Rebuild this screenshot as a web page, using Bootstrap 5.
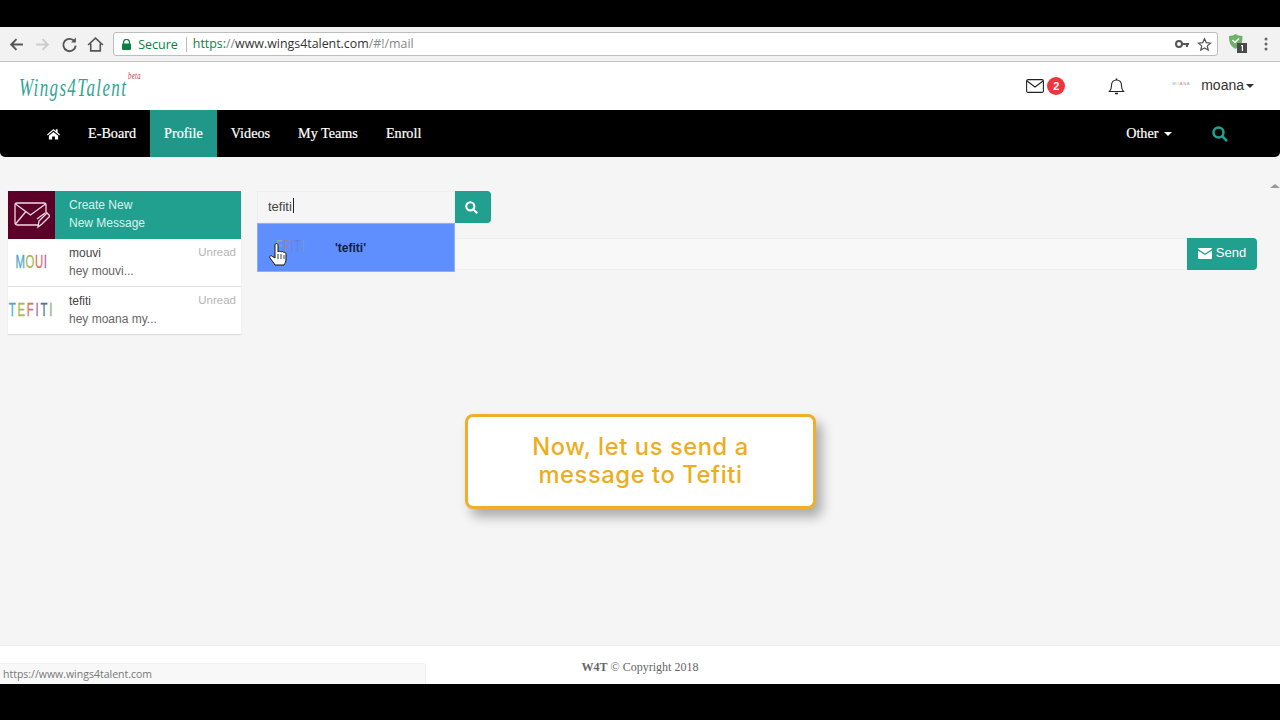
<!DOCTYPE html>
<html lang="en">
<head>
  <meta charset="UTF-8" />
  <meta name="viewport" content="width=device-width, initial-scale=1.0"/>
  <title>Wings4Talent</title>
  <link href="https://cdn.jsdelivr.net/npm/bootstrap@5.3.3/dist/css/bootstrap.min.css" rel="stylesheet" />
  <style>
    body { background: #000; height: 720px; overflow: hidden; padding: 27px 0 36px; font-family: "Liberation Sans", sans-serif; position: relative; }

    .browser-bar { height: 35px; background: #f2f2f2; border-bottom: 1px solid #c4c4c4; padding: 0 8px; }
    .bar-btn { width: 17px; height: 17px; flex: none; }
    .bar-tools { gap: 9.4px; margin-right: 9px; }
    .omnibox { height: 24px; flex: 1; background: #fff; border: 1px solid #bdbdbd; border-radius: 3px; padding: 0 5px 0 8px; font-family: "Open Sans", sans-serif; font-size: 12.5px; }
    .omni-secure { color: #0b8043; padding: 0 8px 0 7px; border-right: 1px solid #bbb; line-height: 15px; }
    .omni-url { color: #333; padding-left: 6px; font-size: 12.4px; }
    .omni-url em { font-style: normal; color: #0b8043; }
    .omni-url span { color: #888; }
    .ext-area { width: 54px; padding-left: 10px; }

    .site-top { height: 48px; background: #fff; padding: 0 26px 0 19px; }
    .site-logo { font-family: "Liberation Serif", serif; font-style: italic; font-size: 25px; letter-spacing: 2px; color: #2fa596; line-height: 1; margin-top: 3px; transform: scaleX(.68); transform-origin: left center; white-space: nowrap; }
    .site-logo sup { font-size: 10px; color: #b3413f; letter-spacing: .5px; top: -17px; left: 1px; position: relative; vertical-align: baseline; }
    .top-mail { gap: 3px; margin-right: 43px; }
    .mail-count { width: 18px; height: 18px; padding: 0; line-height: 18px; background: #f0343c; font-size: 11px; }
    .top-bell { margin-right: 47px; }
    .tiny-avatar { font-size: 4px; letter-spacing: .6px; width: 29px; margin-top: -5px; }
    .top-user { font-size: 14px; color: #333; margin-top: -2px; }
    .tiny-caret { display: inline-block; border-top: 4px solid currentColor; border-left: 4px solid transparent; border-right: 4px solid transparent; margin-left: 2px; vertical-align: 2px; }

    .nav-back { background: #f5f5f5; }
    .site-nav { height: 47px; background: #000; border-radius: 0 0 5px 5px; padding: 0 52px 0 33px; font-family: "Liberation Serif", serif; font-size: 14.2px; font-weight: 500; }
    .site-nav .navbar-nav { height: 47px; }
    .site-nav .nav-link { color: #fff; padding: 0 14px; line-height: 47px; height: 47px; -webkit-text-stroke: .2px #fff; }
    .site-nav .nav-link.active { background: #21978a; color: #fff; }
    .nav-other { margin-right: 40px; color: #fff; -webkit-text-stroke: .2px #fff; }

    .page-main { height: 488px; background: #f5f5f5; position: relative; padding: 34px 23px 0 8px; gap: 16px; }
    .msg-list { width: 233px; flex: none; border-radius: 0; box-shadow: 0 1px 1px rgba(0,0,0,.1); }
    .msg-head { height: 48px; background: #21a08f; color: #d8f5ee; font-size: 12px; line-height: 18px; padding-bottom: 2px; }
    .msg-head-ico { width: 47px; height: 48px; background: #5c0029; margin-right: 14px; margin-bottom: -2px; }
    .msg-row { height: 48px; padding: 0 5px 0 0; font-size: 12px; color: #555; border-color: #e6e6e6; }
    .msg-row + .msg-row { height: 47px; }
    .msg-face { width: 47px; margin-right: 14px; flex: none; font-size: 19px; line-height: 1; white-space: nowrap; }
    .msg-face b { display: block; font-weight: 400; transform: scaleX(.6); transform-origin: center; text-align: center; margin: -2px -20px 0; -webkit-text-stroke: .3px currentColor; }
    .face-wide { letter-spacing: 3px; }
    .face-short { letter-spacing: 1px; }
    .msg-name { color: #444; line-height: 16px; }
    .msg-prev { color: #666; line-height: 20px; }
    .msg-state { color: #b5b5b5; font-size: 11.5px; line-height: 16px; margin-top: 5px; }

    .chat-col { flex: 1; position: relative; }
    .find-box { width: 234px; height: 32px; position: relative; }
    .find-box .form-control { width: 198px; flex: none; height: 32px; background: #f5f5f5; border: 1px solid #eee; border-radius: 0; padding: 0 10px 2px; font-size: 13px; color: #444; box-shadow: none; }
    .caret-bar { border-left: 1px solid #222; height: 15px; position: absolute; left: 36px; top: 7px; z-index: 5; }
    .teal-btn { background: #21a08f; color: #fff; border: 0; }
    .find-btn { width: 36px; height: 32px; padding: 0 3px 0 0; border-radius: 0 4px 4px 0; }
    .find-drop { position: absolute; left: 0; top: 32px; width: 198px; height: 49px; background: #5f8fff; border: 1px solid #8fb0f5; z-index: 3; font-size: 12px; font-weight: 700; color: #12213f; }
    .drop-label { position: absolute; left: 77px; top: 15px; }
    .find-drop i { position: absolute; left: 11px; top: 15px; font-style: normal; font-weight: 400; font-size: 16px; line-height: 1; letter-spacing: 2px; transform: scaleX(.6); transform-origin: left center; opacity: .55; }
    .hand-cursor { position: absolute; left: 11px; top: 19px; width: 18px; height: 24px; }
    .send-row { margin-top: 15px; height: 32px; }
    .send-input { flex: 1; height: 32px; background: #f8f8f8; border: 1px solid #eee; border-radius: 0; }
    .send-btn { width: 70px; height: 32px; padding: 0 0 2px; font-size: 13px; border-radius: 0 4px 4px 0; }
    .scroll-mark { position: absolute; right: 0; top: 27px; border-bottom: 4px solid #999; border-left: 5px solid transparent; border-right: 5px solid transparent; }

    .callout { position: absolute; left: 465px; top: 257px; width: 351px; height: 95px; background: #fff; border: 3px solid #eeb02c; border-radius: 8px; box-shadow: 6px 8px 12px rgba(0,0,0,.3); color: #eead20; font-family: Inter, sans-serif; font-size: 23.7px; font-weight: 500; line-height: 28px; letter-spacing: .6px; padding-bottom: 1px; }

    .site-foot { height: 39px; background: #fff; border-top: 1px solid #ececec; position: relative; font-family: "Liberation Serif", serif; font-size: 12px; color: #666; padding-top: 12px; }
    .link-hint { position: absolute; left: 0; bottom: 0; width: 426px; height: 21px; background: #f8f8f8; border-top: 1px solid #f0f0f0; border-right: 1px solid #f0f0f0; border-radius: 0 3px 0 0; font-family: "Open Sans", sans-serif; font-size: 10.5px; color: #777; padding: 3px; line-height: 15px; }
  </style>
</head>
<body>
  <div class="browser-bar d-flex align-items-center">
    <div class="bar-tools d-flex align-items-center">
      <svg class="bar-btn" viewBox="0 0 16 16" fill="none" stroke="#555" stroke-width="1.8"><path d="M14 8H3M8 3 3 8l5 5"/></svg>
      <svg class="bar-btn" viewBox="0 0 16 16" fill="none" stroke="#ccc" stroke-width="1.8"><path d="M2 8h11M8 3l5 5-5 5"/></svg>
      <svg class="bar-btn" viewBox="0 0 16 16" fill="none" stroke="#555" stroke-width="1.8"><path d="M13 5.5A5.8 5.8 0 1 0 13.8 9"/><path d="M14 1.5V6H9.5" fill="#555" stroke="none"/></svg>
      <svg class="bar-btn" viewBox="0 0 16 16" fill="none" stroke="#555" stroke-width="1.5"><path d="M1 8.5 8 2l7 6.5M3.5 7v7h9V7"/></svg>
    </div>
    <div class="omnibox d-flex align-items-center">
      <svg width="9" height="11" viewBox="0 0 9 11"><path d="M1.5 5V3.4a3 3 0 0 1 6 0V5" fill="none" stroke="#0b8043" stroke-width="1.3"/><rect y="4.5" width="9" height="6.5" rx="1" fill="#0b8043"/></svg>
      <span class="omni-secure">Secure</span>
      <span class="omni-url"><em>https:</em><span>//</span>www.wings4talent.com<span>/#!/mail</span></span>
      <svg class="ms-auto me-2" width="14" height="10" viewBox="0 0 14 10"><circle cx="4" cy="5" r="3" fill="none" stroke="#555" stroke-width="2"/><path d="M7 4h7v2h-1v2h-2V6H7z" fill="#555"/></svg>
      <svg width="15" height="15" viewBox="0 0 16 16" fill="none" stroke="#555" stroke-width="1.3"><path d="m8 1.8 1.9 4.2 4.5.5-3.4 3 1 4.5L8 11.7 4 14l1-4.5-3.4-3 4.5-.5z"/></svg>
    </div>
    <div class="ext-area d-flex align-items-center">
      <svg width="20" height="20" viewBox="0 0 20 20"><path d="M1 2c3 0 5-1 6.500-2 2 1 4 2 7 2 0 6-1 10-7 13C2 12 1 8 1 2z" fill="#6cb36a"/><path d="m4.500 6 2.500 2.500 4-4" fill="none" stroke="#fff" stroke-width="1.500"/><rect x="9" y="9" width="10" height="10" fill="#4a4a4a"/><path d="M13 11h2v6h-1.200v-4.800H13z" fill="#fff"/></svg>
      <svg class="ms-auto me-1" width="4" height="14" viewBox="0 0 4 14" fill="#666"><circle cx="2" cy="2" r="1.500"/><circle cx="2" cy="7" r="1.500"/><circle cx="2" cy="12" r="1.500"/></svg>
    </div>
  </div>

  <header class="site-top d-flex align-items-center">
    <div class="site-logo">Wings4Talent<sup>beta</sup></div>
    <div class="top-mail d-flex align-items-center ms-auto">
      <svg width="18" height="14" viewBox="0 0 18 14" fill="none" stroke="#222" stroke-width="1.100"><rect x=".6" y=".6" width="16.800" height="12.800" rx="1.500"/><path d="m1 2 8 6 8-6"/></svg>
      <span class="badge rounded-circle mail-count">2</span>
    </div>
    <svg class="top-bell" width="17" height="17" viewBox="0 0 17 17" fill="none" stroke="#222" stroke-width="1.100"><path d="M1.500 13.500c1.500-1.500 2-2.500 2-6s2-5.500 5-5.500 5 2 5 5.500.5 4.500 2 6z"/><path d="M8.500.5V2M7 15.500h3" stroke-width="1.500"/></svg>
    <div class="tiny-avatar"><span style="color:#5bb6d8">M</span><span style="color:#c9c36a">O</span><span style="color:#e0705f">A</span><span style="color:#b07ab0">N</span><span style="color:#7fb07a">A</span></div>
    <div class="top-user">moana<i class="tiny-caret"></i></div>
  </header>

  <div class="nav-back">
    <nav class="site-nav d-flex align-items-center">
      <ul class="navbar-nav flex-row">
        <li class="nav-item"><a class="nav-link d-flex align-items-center" href="#">
          <svg width="13" height="12" viewBox="0 0 14 12" fill="#fff"><path d="M7 .5 0 6.500l.8 1L7 2.300l6.200 5.200.8-1-2.500-2.100V1h-2v1.700z"/><path d="M2 8 7 3.800 12 8v4H8.500V8.800h-3V12H2z"/></svg>
        </a></li>
        <li class="nav-item"><a class="nav-link" href="#">E-Board</a></li>
        <li class="nav-item"><a class="nav-link active" href="#">Profile</a></li>
        <li class="nav-item"><a class="nav-link" href="#">Videos</a></li>
        <li class="nav-item"><a class="nav-link" href="#">My Teams</a></li>
        <li class="nav-item"><a class="nav-link" href="#">Enroll</a></li>
      </ul>
      <div class="nav-other ms-auto">Other <i class="tiny-caret"></i></div>
      <svg width="16" height="16" viewBox="0 0 16 16" fill="none" stroke="#21a08f" stroke-width="2.500"><circle cx="6.500" cy="6.500" r="5"/><path d="m10 10 5 5"/></svg>
    </nav>
  </div>

  <main class="page-main d-flex align-items-start">
    <div class="msg-list list-group">
      <div class="msg-head d-flex align-items-center">
        <div class="msg-head-ico d-flex align-items-center justify-content-center">
          <svg width="36" height="27" viewBox="0 0 36 27" fill="none" stroke="#f3d9e2" stroke-width="1.300"><path d="M24 23H3a2 2 0 0 1-2-2V3a2 2 0 0 1 2-2h27a2 2 0 0 1 2 2v8"/><path d="m1.500 2 15 11 15-11M1.500 22l10-12M31 11l-8 6"/><path d="m24 25 1-6 8-8 3 3-8 8z"/></svg>
        </div>
        <div>Create New<br>New Message</div>
      </div>
      <div class="msg-row list-group-item d-flex align-items-center rounded-0 border-0 border-bottom">
        <div class="msg-face"><b class="face-short"><span style="color:#4aa8d0">M</span><span style="color:#a8b84a">O</span><span style="color:#e0705f">U</span><span style="color:#9a6ab0">I</span></b></div>
        <div class="flex-grow-1"><div class="msg-name">mouvi</div><div class="msg-prev">hey mouvi...</div></div>
        <div class="msg-state align-self-start">Unread</div>
      </div>
      <div class="msg-row list-group-item d-flex align-items-center rounded-0 border-0">
        <div class="msg-face"><b class="face-wide"><span style="color:#4aa8d0">T</span><span style="color:#a8b84a">E</span><span style="color:#e0705f">F</span><span style="color:#9a6ab0">I</span><span style="color:#5f6f8a">T</span><span style="color:#7fb07a">I</span></b></div>
        <div class="flex-grow-1"><div class="msg-name">tefiti</div><div class="msg-prev">hey moana my...</div></div>
        <div class="msg-state align-self-start">Unread</div>
      </div>
    </div>

    <div class="chat-col">
      <div class="find-box d-flex">
        <input class="form-control" type="text" value="tefiti" />
        <i class="caret-bar"></i>
        <button class="btn teal-btn find-btn d-flex align-items-center justify-content-center">
          <svg width="13" height="13" viewBox="0 0 16 16" fill="none" stroke="#fff" stroke-width="2.600"><circle cx="6.500" cy="6.500" r="5"/><path d="m10 10 5 5"/></svg>
        </button>
      </div>
      <div class="find-drop">
        <i><span style="color:#5aa0d8">T</span><span style="color:#b8c060">E</span><span style="color:#d8706a">F</span><span style="color:#9a6ab0">I</span><span style="color:#6078a8">T</span><span style="color:#7fb07a">I</span></i>
        <span class="drop-label">'tefiti'</span>
        <svg class="hand-cursor" viewBox="0 0 18 24"><path d="M6 2c0-2 3-2 3 0v7c1-1 2.500-1 3 0 1-.8 2.300-.5 2.800.5 1-.5 2.200 0 2.200 1.500v5c0 3-1 4-2 6H6c-1-2-3-4-5-7-1-2 1-3 2.500-1.500L6 15z" fill="#fff" stroke="#111" stroke-width="1"/><path d="M9 11v5M12 11v5M15 12v4" stroke="#111" stroke-width=".8"/></svg>
      </div>
      <div class="send-row d-flex">
        <div class="send-input"></div>
        <button class="btn teal-btn send-btn d-flex align-items-center justify-content-center gap-1">
          <svg width="14" height="11" viewBox="0 0 14 11" fill="#fff"><path d="M0 1a1 1 0 0 1 1-1h12a1 1 0 0 1 1 1L7 5.500z"/><path d="M0 2.500V10a1 1 0 0 0 1 1h12a1 1 0 0 0 1-1V2.500L7 7z"/></svg>
          Send
        </button>
      </div>
    </div>

    <i class="scroll-mark"></i>
    <div class="callout d-flex align-items-center justify-content-center text-center">Now, let us send a<br>message to Tefiti</div>
  </main>

  <footer class="site-foot text-center">
    <b>W4T</b> © Copyright 2018
    <div class="link-hint text-start">https://www.wings4talent.com</div>
  </footer>
</body>
</html>
